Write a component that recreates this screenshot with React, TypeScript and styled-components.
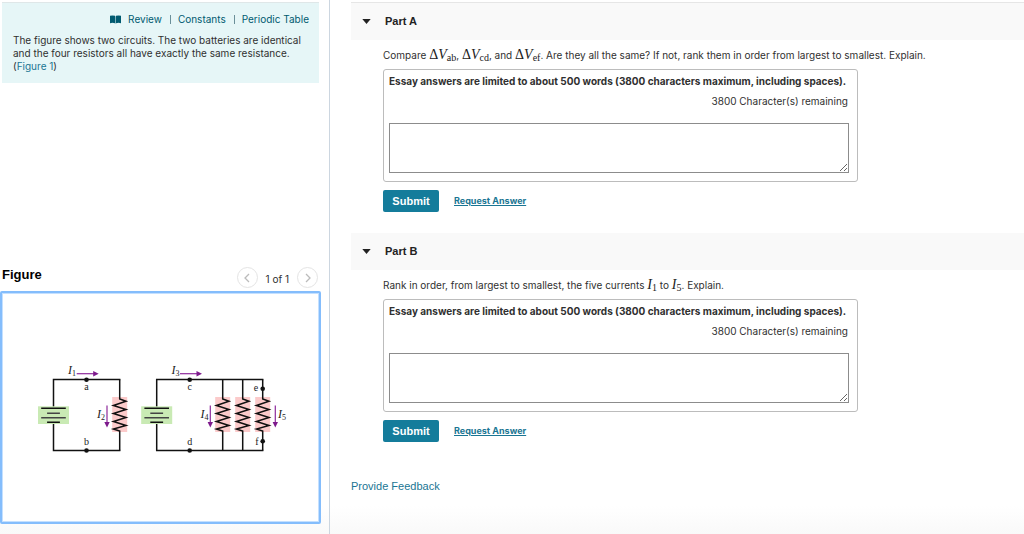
import React, { useState } from "react";
import styled, { createGlobalStyle } from "styled-components";

const GlobalStyle = createGlobalStyle`
  *, *::before, *::after { box-sizing: border-box; }
  body {
    margin: 0;
    background: #fff;
    color: #303030;
    font-family: Inter, "Liberation Sans", Arial, sans-serif;
    font-size: 10px;
    line-height: 13px;
  }
`;

const Page = styled.div`
  display: grid;
  grid-template-columns: 330px minmax(0, 1fr);
  min-height: 100vh;
  background: linear-gradient(to top, #f9f9f9, #fff 28px);
`;

const Sidebar = styled.aside`
  padding-top: 2px;
  border-right: 1px solid #ccd6e0;
`;

const Intro = styled.section`
  margin: 0 10px 0 2px;
  padding: 10px 10px 10px 11px;
  min-height: 81px;
  background: #e6f6f7;
  border-top: 1px solid #dfe7e8;
`;

const Resources = styled.nav`
  display: flex;
  align-items: center;
  justify-content: flex-end;
  margin-bottom: 8px;
`;

const ResourceLink = styled.a`
  color: #005a70;
  text-decoration: none;
  display: flex;
  align-items: center;
  gap: 7px;

  & + & {
    margin-left: 8px;
    padding-left: 8px;
    background: linear-gradient(#6b8f99, #6b8f99) 0 2px / 1px 9px no-repeat;
  }
`;

const Link = styled.a`
  color: #1a7593;
  text-decoration: none;
`;

const Text = styled.p`
  margin: 0;
`;

const FigureSection = styled.section`
  margin-top: 182px;
`;

const FigureHeader = styled.div`
  display: flex;
  align-items: flex-start;
  justify-content: space-between;
  height: 26px;
  padding: 2px 11px 0 2px;
`;

const FigureTitle = styled.h2`
  margin: 0;
  color: #000;
  font: bold 13px/16px "Liberation Sans", Arial, sans-serif;
`;

const Pager = styled.div`
  display: flex;
  align-items: center;
  gap: 8px;
`;

const PagerButton = styled.button`
  display: flex;
  align-items: center;
  justify-content: center;
  width: 21px;
  height: 21px;
  padding: 0;
  border: 1px solid #e4e4e4;
  border-radius: 50%;
  background: #fff;
`;

const PagerLabel = styled.span`
  padding-top: 4px;
`;

const FigureFrame = styled.div`
  display: flex;
  align-items: center;
  justify-content: center;
  height: 233px;
  margin-right: 8px;
  border: 2px solid #84bdfc;
  border-radius: 2px;
  box-shadow: inset 0 0 0 1px #c4e0ff;
  background: #fff;
`;

const Main = styled.main`
  padding: 2px 0 24px 21px;
`;

const Part = styled.section<{ $first?: boolean }>`
  border-top: ${(p) => (p.$first ? "1px solid #e6e6e6" : "0")};
  padding-bottom: 21px;
`;

const PartHeader = styled.h2`
  margin: 0;
  height: 37px;
  background: #f9f9f9;
  font: bold 11px/13px "Liberation Sans", Arial, sans-serif;
`;

const PartToggle = styled.button`
  display: flex;
  align-items: center;
  gap: 14px;
  width: 100%;
  height: 100%;
  padding: 0 0 0 11px;
  border: 0;
  background: none;
  color: #222;
  font: inherit;
  text-align: left;
`;

const PartBody = styled.div`
  padding-left: 32px;
`;

const Prompt = styled.p`
  margin: 0;
  padding: 7px 0 6px;
  line-height: 16px;
`;

const MathText = styled.span`
  font-family: "Liberation Serif", "Times New Roman", serif;
  font-size: 14px;
  line-height: 1;
  color: #222;

  sub {
    font-size: 10px;
    line-height: 1;
    vertical-align: -2px;
  }
`;

const Essay = styled.div`
  max-width: 475px;
  padding: 5px 8px 8px 5px;
  border: 1px solid #bcbcbc;
  border-radius: 3px;
  background: #fff;
`;

const EssayLabel = styled.label`
  display: block;
  font-weight: bold;
`;

const Remaining = styled.p`
  margin: 7px 1px 15px 0;
  text-align: right;
`;

const EssayInput = styled.textarea`
  display: block;
  width: 100%;
  height: 50px;
  padding: 2px;
  border: 1px solid #8c8c8c;
  border-radius: 0;
  background: #fff;
  font: inherit;
  resize: vertical;
`;

const Actions = styled.div`
  display: flex;
  align-items: center;
  gap: 15px;
  margin-top: 8px;
`;

const SubmitButton = styled.button`
  width: 56px;
  height: 22px;
  padding: 0;
  border: 0;
  border-radius: 2px;
  background: #147c9b;
  color: #fff;
  font: bold 11px/22px "Liberation Sans", Arial, sans-serif;
`;

const RequestLink = styled(Link)`
  padding-bottom: 2px;
  font-size: 9px;
  font-weight: bold;
  text-decoration: underline;
`;

const Feedback = styled(Link)`
  display: inline-block;
  margin-top: 17px;
  font: 11px/13px "Liberation Sans", Arial, sans-serif;
`;

function BookIcon() {
  return (
    <svg width="11" height="9" viewBox="0 0 11 9" aria-hidden="true">
      <path d="M0 0.800 Q2.500 0 5 0.800 V8.200 Q2.500 7.400 0 8.200Z M6 0.800 Q8.500 0 11 0.800 V8.200 Q8.500 7.400 6 8.200Z" fill="#005a70" />
      <path d="M5 1.200H6V8.600H5Z" fill="#005a70" opacity="0.45" />
    </svg>
  );
}

function Chevron({ direction }: { direction: "left" | "right" }) {
  return (
    <svg width="6" height="10" viewBox="0 0 6 10" aria-hidden="true">
      <path d={direction === "left" ? "M5 1 1 5 5 9" : "M1 1 5 5 1 9"} fill="none" stroke="#bbb" strokeWidth="1.300" />
    </svg>
  );
}

function Caret() {
  return (
    <svg width="9" height="5" viewBox="0 0 9 5" aria-hidden="true">
      <path d="M0.300 0H8.700L4.500 5Z" fill="#222" />
    </svg>
  );
}

const wire = { fill: "none", stroke: "#111", strokeWidth: 1.5 };

function Battery({ x }: { x: number }) {
  return (
    <g>
      <rect x={x - 15.5} y="406.300" width="31" height="17.700" fill="#c9eab4" />
      <path d={`M${x - 12.3} 408.300h24.600M${x - 6.4} 422.300h12.800`} {...wire} />
      <path d={`M${x - 6.4} 413.300h12.800M${x - 12.3} 417.700h24.600`} {...wire} stroke="#444" />
    </g>
  );
}

function Resistor({ x }: { x: number }) {
  return (
    <g>
      <rect x={x - 7.5} y="397" width="15" height="35" fill="#fbcaca" />
      <path
        d={`M${x} 379.500V399l6.300 2.300-12.600 4.200 12.600 4-12.600 4 12.600 4-12.600 4 12.600 4-12.600 3.500 6.300 2V450.500`}
        {...wire}
      />
    </g>
  );
}

function Arrow({ x, y, down }: { x: number; y: number; down?: boolean }) {
  return (
    <g transform={`translate(${x} ${y})${down ? " rotate(90)" : ""}`}>
      <path d="M0 0H18" stroke="#8e2a9b" strokeWidth="1.200" />
      <path d="M16.500-2.700 22 0 16.500 2.700Z" fill="#7d1a8c" />
    </g>
  );
}

function Current({ x, y, n }: { x: number; y: number; n: number }) {
  return (
    <text x={x} y={y} fontSize="12" fontStyle="italic">
      I<tspan fontSize="8" fontStyle="normal" dy="2">{n}</tspan>
    </text>
  );
}

function Junction({ x, y }: { x: number; y: number }) {
  return <circle cx={x} cy={y} r="2.300" fill="#111" />;
}

function CircuitFigure() {
  return (
    <svg
      width="261"
      height="100"
      viewBox="30 358 261 100"
      role="img"
      aria-label="Two battery and resistor circuits"
      fontFamily="'Liberation Serif', serif"
      fontSize="10"
      fill="#222"
    >
      <path d="M53.500 408.300V379.500H120.400M53.500 422.300V450.500H120.400" {...wire} />
      <Battery x={53.5} />
      <Resistor x={119.7} />
      <Junction x={86.5} y={379.7} />
      <Junction x={86.5} y={450.5} />
      <text x="86.500" y="389.500" textAnchor="middle">a</text>
      <text x="86.500" y="445" textAnchor="middle">b</text>
      <Current x={68} y={374} n={1} />
      <Arrow x={76.7} y={373.7} />
      <Current x={97} y={418} n={2} />
      <Arrow x={107} y={405.5} down />

      <path d="M156.700 408.300V379.500H263.400M156.700 422.300V450.500H263.400" {...wire} />
      <Battery x={156.7} />
      <Resistor x={222.7} />
      <Resistor x={242.7} />
      <Resistor x={262.7} />
      <Junction x={189.7} y={379.7} />
      <Junction x={189.7} y={450.5} />
      <Junction x={262.7} y={388.7} />
      <Junction x={262.7} y={441.3} />
      <text x="189.700" y="389.500" textAnchor="middle">c</text>
      <text x="189.700" y="445" textAnchor="middle">d</text>
      <text x="256" y="391" textAnchor="middle">e</text>
      <text x="257" y="444.500" textAnchor="middle">f</text>
      <Current x={171.5} y={374} n={3} />
      <Arrow x={180} y={373.7} />
      <Current x={200.5} y={418} n={4} />
      <Arrow x={210.3} y={405.5} down />
      <Arrow x={275.3} y={405.5} down />
      <Current x={278} y={418} n={5} />
    </svg>
  );
}

interface QuestionProps {
  id: string;
  title: string;
  first?: boolean;
  children: React.ReactNode;
}

function Question({ id, title, first, children }: QuestionProps) {
  const [open, setOpen] = useState(true);
  const [answer, setAnswer] = useState("");
  return (
    <Part $first={first}>
      <PartHeader>
        <PartToggle type="button" aria-expanded={open} onClick={() => setOpen(!open)}>
          <Caret />
          {title}
        </PartToggle>
      </PartHeader>
      {open && (
        <PartBody>
          <Prompt>{children}</Prompt>
          <Essay>
            <EssayLabel htmlFor={id}>
              Essay answers are limited to about 500 words (3800 characters maximum, including spaces).
            </EssayLabel>
            <Remaining>{3800 - answer.length} Character(s) remaining</Remaining>
            <EssayInput id={id} maxLength={3800} value={answer} onChange={(e) => setAnswer(e.target.value)} />
          </Essay>
          <Actions>
            <SubmitButton type="button">Submit</SubmitButton>
            <RequestLink href="#request">Request Answer</RequestLink>
          </Actions>
        </PartBody>
      )}
    </Part>
  );
}

export default function App() {
  return (
    <>
      <GlobalStyle />
      <Page>
        <Sidebar>
          <Intro>
            <Resources>
              <ResourceLink href="#review"><BookIcon />Review</ResourceLink>
              <ResourceLink href="#constants">Constants</ResourceLink>
              <ResourceLink href="#periodic-table">Periodic Table</ResourceLink>
            </Resources>
            <Text>
              The figure shows two circuits. The two batteries are identical and the four resistors all have
              exactly the same resistance. (<Link href="#figure">Figure 1</Link>)
            </Text>
          </Intro>
          <FigureSection id="figure">
            <FigureHeader>
              <FigureTitle>Figure</FigureTitle>
              <Pager>
                <PagerButton type="button" aria-label="Previous figure"><Chevron direction="left" /></PagerButton>
                <PagerLabel>1 of 1</PagerLabel>
                <PagerButton type="button" aria-label="Next figure"><Chevron direction="right" /></PagerButton>
              </Pager>
            </FigureHeader>
            <FigureFrame>
              <CircuitFigure />
            </FigureFrame>
          </FigureSection>
        </Sidebar>
        <Main>
          <Question id="essay-a" title="Part A" first>
            Compare <MathText>Δ<i>V</i><sub>ab</sub></MathText>, <MathText>Δ<i>V</i><sub>cd</sub></MathText>, and{" "}
            <MathText>Δ<i>V</i><sub>ef</sub></MathText>. Are they all the same? If not, rank them in order from
            largest to smallest. Explain.
          </Question>
          <Question id="essay-b" title="Part B">
            Rank in order, from largest to smallest, the five currents <MathText><i>I</i><sub>1</sub></MathText> to{" "}
            <MathText><i>I</i><sub>5</sub></MathText>. Explain.
          </Question>
          <Feedback href="#feedback">Provide Feedback</Feedback>
        </Main>
      </Page>
    </>
  );
}
